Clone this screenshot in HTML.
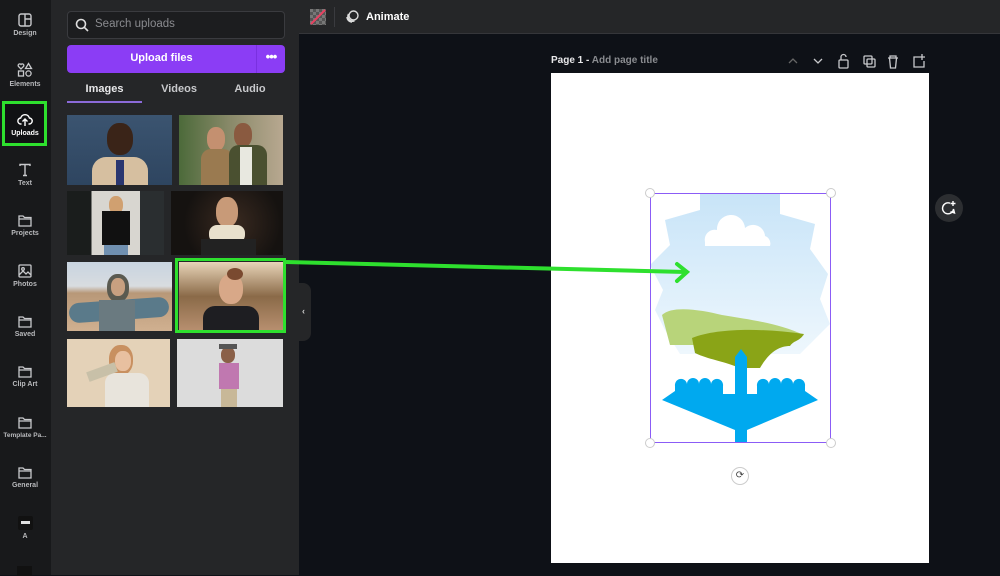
<!DOCTYPE html>
<html><head><meta charset="utf-8"><style>
*{margin:0;padding:0;box-sizing:border-box}
body{width:1000px;height:575px;overflow:hidden;background:#0e1117;font-family:"Liberation Sans",sans-serif;position:relative}
.abs{position:absolute}
.side{left:0;top:0;width:51px;height:575px;background:#18191b}
.si{position:absolute;left:0;width:50px;text-align:center;color:#b8b9bc;font-size:7px;font-weight:bold}
.si svg{display:block;margin:0 auto 3px}
.panel{left:51px;top:0;width:248px;height:575px;background:#252628}
.top{left:299px;top:0;width:701px;height:34px;background:#252628;border-bottom:1px solid #35363a}
.img{position:absolute;overflow:hidden}
</style></head><body>
<div class="abs side">
 <div class="si" style="top:13px"><svg width="14" height="14" viewBox="0 0 14 14" fill="none" stroke="#c8c9cc" stroke-width="1.4"><rect x="1" y="1" width="12" height="12" rx="2"/><path d="M7 1v12M7 6h6"/></svg>Design</div>
 <div class="si" style="top:62px"><svg width="16" height="16" viewBox="0 0 16 16" fill="none" stroke="#c8c9cc" stroke-width="1.3"><path d="M4 7L1.5 4.5a1.5 1.5 0 0 1 2.5-2 1.5 1.5 0 0 1 2.5 2z"/><path d="M11.5 1.5l3 5h-6z"/><rect x="1.5" y="9" width="5" height="5"/><circle cx="11.5" cy="11.5" r="2.6"/></svg>Elements</div>
 <div class="abs" style="left:2px;top:101px;width:45px;height:45px;border:3px solid #2ee02e;background:#111214"></div>
 <div class="si" style="top:113px;color:#fff"><svg width="16" height="14" viewBox="0 0 16 14" fill="none" stroke="#fff" stroke-width="1.4"><path d="M4.5 11H4a3 3 0 0 1-.3-6A4.5 4.5 0 0 1 12.4 5 3 3 0 0 1 12 11h-.5"/><path d="M8 13V6M5.5 8.5L8 6l2.5 2.5"/></svg>Uploads</div>
 <div class="si" style="top:163px"><svg width="14" height="14" viewBox="0 0 14 14" fill="none" stroke="#c8c9cc" stroke-width="1.4"><path d="M2 3V1.5h10V3M7 1.5v11M5 12.5h4"/></svg>Text</div>
 <div class="si" style="top:214px"><svg width="14" height="13" viewBox="0 0 14 13" fill="none" stroke="#c8c9cc" stroke-width="1.3"><path d="M1 2h4l1.5 1.5H13V12H1z M1 5h12"/></svg>Projects</div>
 <div class="si" style="top:264px"><svg width="14" height="14" viewBox="0 0 14 14" fill="none" stroke="#c8c9cc" stroke-width="1.3"><rect x="1" y="1" width="12" height="12" rx="1"/><circle cx="5" cy="5" r="1.3"/><path d="M1 11l4-4 3 3 2-2 3 3"/></svg>Photos</div>
 <div class="si" style="top:315px"><svg width="14" height="13" viewBox="0 0 14 13" fill="none" stroke="#c8c9cc" stroke-width="1.3"><path d="M1 2h4l1.5 1.5H13V12H1z M1 5h12"/></svg>Saved</div>
 <div class="si" style="top:365px"><svg width="14" height="13" viewBox="0 0 14 13" fill="none" stroke="#c8c9cc" stroke-width="1.3"><path d="M1 2h4l1.5 1.5H13V12H1z M1 5h12"/></svg>Clip Art</div>
 <div class="si" style="top:416px;font-size:6.5px"><svg width="14" height="13" viewBox="0 0 14 13" fill="none" stroke="#c8c9cc" stroke-width="1.3"><path d="M1 2h4l1.5 1.5H13V12H1z M1 5h12"/></svg>Template Pa...</div>
 <div class="si" style="top:466px"><svg width="14" height="13" viewBox="0 0 14 13" fill="none" stroke="#c8c9cc" stroke-width="1.3"><path d="M1 2h4l1.5 1.5H13V12H1z M1 5h12"/></svg>General</div>
 <div class="si" style="top:516px"><div style="width:15px;height:14px;background:#111;margin:0 auto 3px;border-radius:2px;position:relative"><div style="position:absolute;left:3px;top:5px;width:9px;height:3px;background:#ddd"></div></div>A</div>
 <div class="abs" style="left:17px;top:566px;width:15px;height:10px;background:#111"></div>
</div>
<div class="abs panel">
 <div class="abs" style="left:16px;top:11px;width:218px;height:28px;border:1px solid #3a3b3f;border-radius:4px;background:#1c1d1f"></div>
 <svg class="abs" style="left:24px;top:18px" width="14" height="14" viewBox="0 0 14 14" fill="none" stroke="#ddd" stroke-width="1.6"><circle cx="6" cy="6" r="4.5"/><path d="M9.3 9.3L13 13"/></svg>
 <div class="abs" style="left:44px;top:18px;color:#8a8b8f;font-size:11.5px">Search uploads</div>
 <div class="abs" style="left:16px;top:45px;width:218px;height:28px;background:#8b3df5;border-radius:4px"></div>
 <div class="abs" style="left:205px;top:45px;width:1px;height:28px;background:#7a30e0"></div>
 <div class="abs" style="left:16px;top:52px;width:189px;text-align:center;color:#fff;font-size:11px;font-weight:bold">Upload files</div>
 <div class="abs" style="left:206px;top:49px;width:28px;text-align:center;color:#fff;font-size:13px;font-weight:bold;letter-spacing:-1px">•••</div>
 <div class="abs" style="left:16px;top:83px;width:75px;text-align:center;color:#e8e8ea;font-size:11px;font-weight:bold">Images</div>
 <div class="abs" style="left:16px;top:101px;width:75px;height:2px;background:#8b6ad8"></div>
 <div class="abs" style="left:103px;top:83px;width:50px;text-align:center;color:#c8c9cc;font-size:11px;font-weight:bold">Videos</div>
 <div class="abs" style="left:174px;top:83px;width:50px;text-align:center;color:#c8c9cc;font-size:11px;font-weight:bold">Audio</div>
</div>
<!-- images -->
<div class="img" style="left:67px;top:115px;width:105px;height:70px;background:linear-gradient(#3b5470,#2e4560)">
 <div class="abs" style="left:40px;top:8px;width:26px;height:32px;border-radius:45%;background:#3a2418"></div>
 <div class="abs" style="left:25px;top:42px;width:56px;height:30px;border-radius:14px 14px 0 0;background:#d6bfa0"></div>
 <div class="abs" style="left:49px;top:45px;width:8px;height:25px;background:#2a3670"></div>
</div>
<div class="img" style="left:179px;top:115px;width:104px;height:70px;background:linear-gradient(90deg,#4c6a3a,#8a8a6a 50%,#b8a890)">
 <div class="abs" style="left:28px;top:12px;width:18px;height:24px;border-radius:45%;background:#c49070"></div>
 <div class="abs" style="left:22px;top:34px;width:32px;height:36px;border-radius:10px 10px 0 0;background:#9a7a50"></div>
 <div class="abs" style="left:55px;top:8px;width:18px;height:24px;border-radius:45%;background:#8a5a40"></div>
 <div class="abs" style="left:50px;top:30px;width:38px;height:40px;border-radius:10px 10px 0 0;background:#4a5030"></div>
 <div class="abs" style="left:61px;top:32px;width:12px;height:38px;background:#e8e8e0"></div>
</div>
<div class="img" style="left:67px;top:191px;width:97px;height:64px;background:linear-gradient(90deg,#1a1d1c 25%,#d8d6d0 25%,#d8d6d0 75%,#2a2e30 75%)">
 <div class="abs" style="left:42px;top:5px;width:14px;height:18px;border-radius:45%;background:#d0a070"></div>
 <div class="abs" style="left:35px;top:20px;width:28px;height:34px;background:#111"></div>
 <div class="abs" style="left:37px;top:54px;width:24px;height:10px;background:#7090b0"></div>
</div>
<div class="img" style="left:171px;top:191px;width:112px;height:64px;background:radial-gradient(circle at 55% 50%,#3a2a20,#151210 70%)">
 <div class="abs" style="left:45px;top:6px;width:22px;height:30px;border-radius:45%;background:#c89a78"></div>
 <div class="abs" style="left:38px;top:34px;width:36px;height:18px;border-radius:8px;background:#e8e0cc"></div>
 <div class="abs" style="left:30px;top:48px;width:55px;height:16px;background:#222"></div>
</div>
<div class="img" style="left:67px;top:262px;width:105px;height:69px;background:linear-gradient(#c8d4e0 0,#d8dce0 35%,#b89878 45%,#d0b090 100%)">
 <div class="abs" style="left:40px;top:12px;width:22px;height:28px;border-radius:45%;background:#5a5a50"></div>
 <div class="abs" style="left:44px;top:16px;width:14px;height:18px;border-radius:45%;background:#c8a080"></div>
 <div class="abs" style="left:2px;top:38px;width:100px;height:20px;border-radius:10px;background:#5a7a8a;transform:rotate(-4deg)"></div>
 <div class="abs" style="left:32px;top:38px;width:36px;height:31px;background:#6a7a80"></div>
</div>
<div class="img" style="left:179px;top:262px;width:104px;height:69px;background:linear-gradient(#e8d4b8,#8a6a48 50%,#b89070)">
 <div class="abs" style="left:40px;top:12px;width:24px;height:30px;border-radius:45%;background:#d8a888"></div>
 <div class="abs" style="left:48px;top:6px;width:16px;height:12px;border-radius:50%;background:#7a4a30"></div>
 <div class="abs" style="left:24px;top:44px;width:56px;height:25px;border-radius:12px 12px 0 0;background:#1e1e22"></div>
</div>
<div class="abs" style="left:175px;top:258px;width:111px;height:75px;border:3px solid #2ee02e"></div>
<div class="img" style="left:67px;top:339px;width:103px;height:68px;background:#e4d2b8">
 <div class="abs" style="left:42px;top:6px;width:24px;height:30px;border-radius:45%;background:#c89060"></div>
 <div class="abs" style="left:48px;top:12px;width:16px;height:20px;border-radius:45%;background:#e8c0a0"></div>
 <div class="abs" style="left:38px;top:34px;width:44px;height:34px;border-radius:10px 10px 0 0;background:#e8e4dc"></div>
 <div class="abs" style="left:20px;top:28px;width:30px;height:10px;background:#c8c0a8;transform:rotate(-20deg)"></div>
</div>
<div class="img" style="left:177px;top:339px;width:106px;height:68px;background:#dcdcdc">
 <div class="abs" style="left:44px;top:8px;width:14px;height:16px;border-radius:45%;background:#8a6048"></div>
 <div class="abs" style="left:42px;top:5px;width:18px;height:5px;background:#555"></div>
 <div class="abs" style="left:42px;top:24px;width:20px;height:26px;background:#c078b0"></div>
 <div class="abs" style="left:44px;top:50px;width:16px;height:18px;background:#c8b898"></div>
</div>
<!-- collapse tab -->
<div class="abs" style="left:299px;top:283px;width:12px;height:58px;background:#252628;border-radius:0 8px 8px 0"></div>
<div class="abs" style="left:302px;top:306px;color:#ccc;font-size:9px;font-weight:bold">‹</div>
<!-- top bar -->
<div class="abs top">
 <div class="abs" style="left:11px;top:9px;width:16px;height:16px;background:repeating-conic-gradient(#555 0 25%,#777 0 50%) 0 0/6px 6px"></div>
 <div class="abs" style="left:9px;top:16px;width:20px;height:2px;background:#e84060;transform:rotate(-45deg)"></div>
 <div class="abs" style="left:35px;top:7px;width:1px;height:20px;background:#3a3b3f"></div>
 <svg class="abs" style="left:46px;top:9px" width="15" height="15" viewBox="0 0 15 15" fill="none" stroke="#ddd" stroke-width="1.4"><circle cx="8.5" cy="6.5" r="4.5"/><path d="M3.5 5a5 5 0 0 0 6 7M2 8a5 5 0 0 0 5 5"/></svg>
 <div class="abs" style="left:67px;top:11px;color:#fff;font-size:11px;font-weight:bold">Animate</div>
</div>
<!-- page header -->
<div class="abs" style="left:551px;top:55px;font-size:10px;font-weight:bold;color:#e8e8ea">Page 1 - <span style="color:#8a8c90">Add page title</span></div>
<svg class="abs" style="left:786px;top:53px" width="145" height="16" viewBox="0 0 145 16" fill="none" stroke="#c8c9cc" stroke-width="1.3">
 <path d="M3 10l4-4 4 4" stroke="#666"/><path d="M28 6l4 4 4-4"/>
 <rect x="53" y="7" width="9" height="8" rx="1"/><path d="M55 7V4a2.5 2.5 0 0 1 5 0"/>
 <rect x="78" y="3" width="8" height="8" rx="1"/><rect x="81" y="6" width="8" height="8" rx="1"/>
 <path d="M102 5h10M104 5V3h6v2M103.5 5l1 10h5l1-10"/>
 <path d="M134 4h-6v10h10V8M136 1v6M133 4h6"/>
</svg>
<!-- page -->
<div class="abs" style="left:551px;top:73px;width:378px;height:490px;background:#fff"></div>
<svg class="abs" style="left:640px;top:180px" width="200" height="300" viewBox="0 0 200 300">
 <defs><linearGradient id="sky" x1="0" y1="0" x2="0" y2="1"><stop offset="0" stop-color="#c8e4f8"/><stop offset="1" stop-color="#eef7fd"/></linearGradient></defs>
 <path d="M60 14h80v20l35 10-5 25 18 25-8 25 10 25-20 20-10 10H40L25 150l-10-20 8-20-13-25 20-20-5-25 35-10z" fill="url(#sky)"/>
 <path d="M65 62a10 10 0 0 1 12-12 14 14 0 0 1 28-2 12 12 0 0 1 20 8 8 8 0 0 1 5 10H65z" fill="#fff"/>
 <path d="M22 135c10-10 40-5 60 0 30 5 55 8 82 20l-25 10H30z" fill="#b8d47a"/>
 <path d="M52 158c25-10 70-10 112-4-5 8-10 6-14 12-10 0-20 5-30 22h-20c-20-8-30-8-45-15z" fill="#8aa417"/>
 <g fill="#00a9ef">
 <path d="M95 177L101 169L107 177V252H95Z"/>
 <path d="M35 214V206a6 6 0 0 1 12-2a6 6 0 0 1 12 0a6 6 0 0 1 12 0a6 6 0 0 1 12 2V214Z"/>
 <path d="M117 214V206a6 6 0 0 1 12-2a6 6 0 0 1 12 0a6 6 0 0 1 12 0a6 6 0 0 1 12 2V214Z"/>
 <path d="M22 220L35 211H83V214H117V211H165L178 220L107 250V263H95V250Z"/>
 </g>
</svg>
<div class="abs" style="left:650px;top:193px;width:181px;height:250px;border:1.5px solid #8b5cf6"></div>
<div class="abs" style="left:645px;top:188px;width:10px;height:10px;border-radius:50%;background:#fff;border:1px solid #ccc"></div>
<div class="abs" style="left:826px;top:188px;width:10px;height:10px;border-radius:50%;background:#fff;border:1px solid #ccc"></div>
<div class="abs" style="left:645px;top:438px;width:10px;height:10px;border-radius:50%;background:#fff;border:1px solid #ccc"></div>
<div class="abs" style="left:826px;top:438px;width:10px;height:10px;border-radius:50%;background:#fff;border:1px solid #ccc"></div>
<div class="abs" style="left:731px;top:467px;width:18px;height:18px;border-radius:50%;background:#fff;border:1px solid #ccc;text-align:center;font-size:10px;line-height:16px;color:#444">⟳</div>
<!-- comment button -->
<div class="abs" style="left:935px;top:194px;width:28px;height:28px;border-radius:50%;background:#2c2e31"></div>
<svg class="abs" style="left:941px;top:200px" width="16" height="16" viewBox="0 0 16 16" fill="none" stroke="#fff" stroke-width="1.4"><path d="M9 3.2A5.5 5.5 0 1 0 12.5 9l1 4-4-1.3"/><path d="M12 1v5M9.5 3.5h5"/></svg>
<!-- green arrow -->
<svg class="abs" style="left:0;top:0" width="1000" height="575"><path d="M286 262L686 272" stroke="#2ee02e" stroke-width="4" fill="none"/><path d="M677 264l10 8-10 9" stroke="#2ee02e" stroke-width="4" fill="none" stroke-linecap="round"/></svg>
</body></html>
